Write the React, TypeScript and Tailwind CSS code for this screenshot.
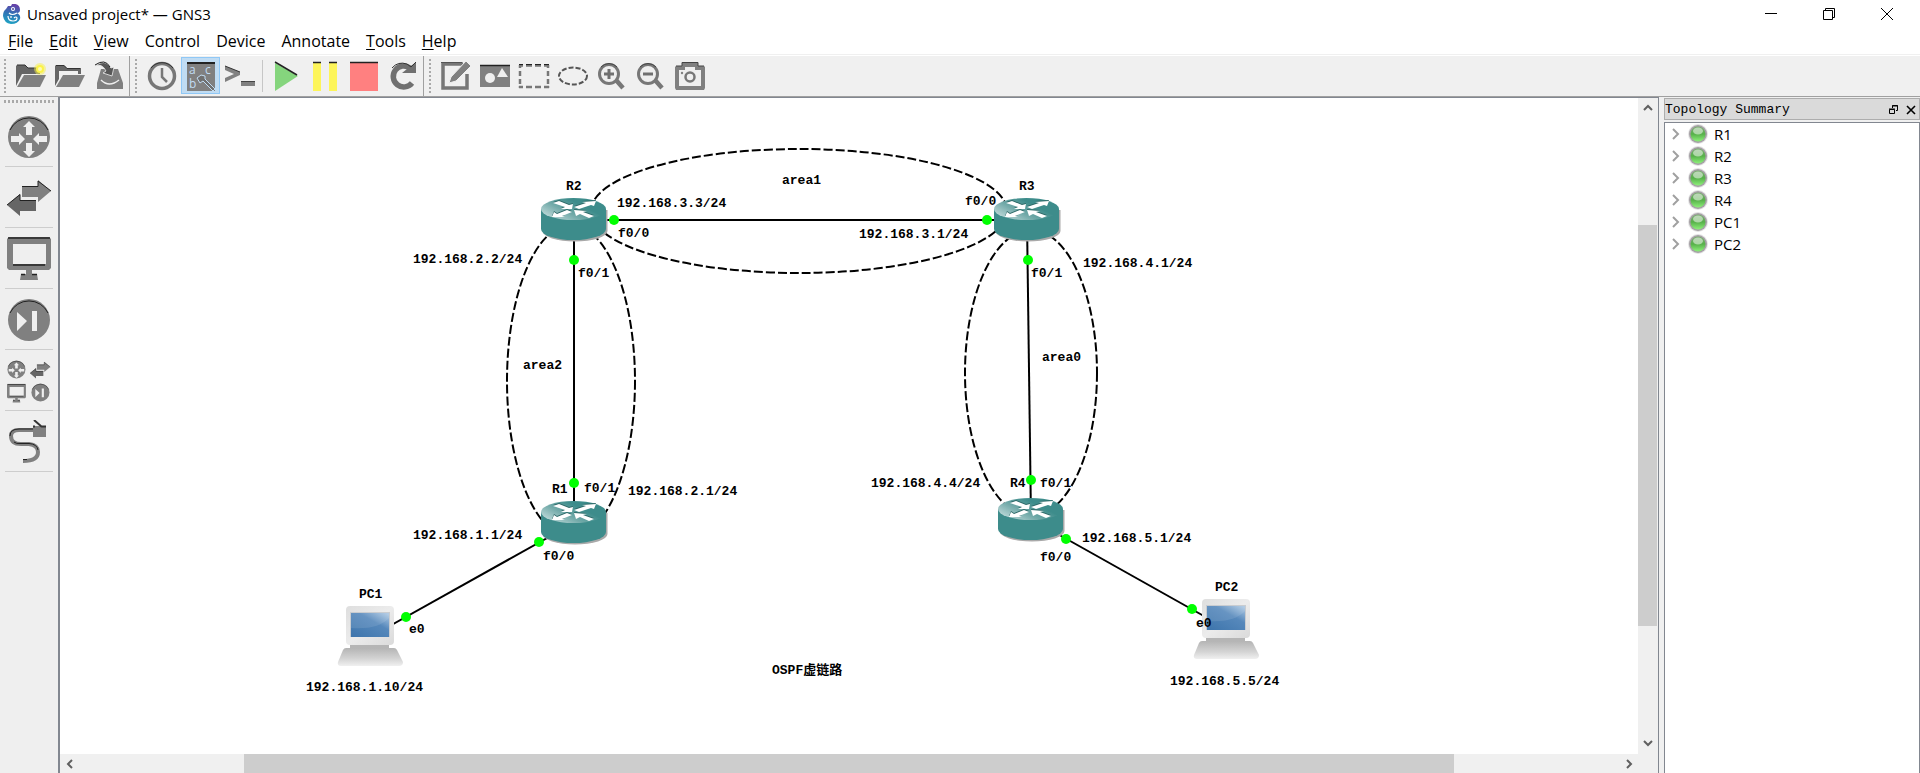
import { useState } from "react";
import type { ReactNode } from "react";
import clsx from "clsx";

const menus = [
  { key: "F", rest: "ile" },
  { key: "E", rest: "dit" },
  { key: "V", rest: "iew" },
  { key: "", rest: "Control" },
  { key: "", rest: "Device" },
  { key: "", rest: "Annotate" },
  { key: "T", rest: "ools" },
  { key: "H", rest: "elp" },
];

const topology = ["R1", "R2", "R3", "R4", "PC1", "PC2"];

const routers = [
  { id: "R2", x: 541, y: 198 },
  { id: "R3", x: 994, y: 198 },
  { id: "R1", x: 541, y: 501 },
  { id: "R4", x: 998, y: 498 },
];

const computers = [
  { id: "PC1", x: 338, y: 606 },
  { id: "PC2", x: 1194, y: 599 },
];

const links = [
  { from: [574, 220], to: [1027, 220] },
  { from: [574, 220], to: [574, 522] },
  { from: [1027, 220], to: [1031, 519] },
  { from: [574, 523], to: [370, 637] },
  { from: [1031, 519], to: [1227, 629] },
];

const ports = [
  [614, 220],
  [574, 260],
  [987, 220],
  [1028, 260],
  [574, 483],
  [1031, 480],
  [539, 542],
  [406, 617],
  [1066, 539],
  [1192, 609],
];

const areas = [
  { cx: 799, cy: 211, rx: 208, ry: 62 },
  { cx: 571, cy: 381, rx: 64, ry: 156 },
  { cx: 1031, cy: 373, rx: 66, ry: 143 },
];

const labels = [
  { x: 566, y: 190, text: "R2" },
  { x: 617, y: 207, text: "192.168.3.3/24" },
  { x: 618, y: 237, text: "f0/0" },
  { x: 578, y: 277, text: "f0/1" },
  { x: 413, y: 263, text: "192.168.2.2/24" },
  { x: 782, y: 184, text: "area1" },
  { x: 1019, y: 190, text: "R3" },
  { x: 965, y: 205, text: "f0/0" },
  { x: 859, y: 238, text: "192.168.3.1/24" },
  { x: 1031, y: 277, text: "f0/1" },
  { x: 1083, y: 267, text: "192.168.4.1/24" },
  { x: 523, y: 369, text: "area2" },
  { x: 1042, y: 361, text: "area0" },
  { x: 552, y: 493, text: "R1" },
  { x: 584, y: 492, text: "f0/1" },
  { x: 628, y: 495, text: "192.168.2.1/24" },
  { x: 413, y: 539, text: "192.168.1.1/24" },
  { x: 543, y: 560, text: "f0/0" },
  { x: 359, y: 598, text: "PC1" },
  { x: 409, y: 633, text: "e0" },
  { x: 306, y: 691, text: "192.168.1.10/24" },
  { x: 1010, y: 487, text: "R4" },
  { x: 1040, y: 487, text: "f0/1" },
  { x: 871, y: 487, text: "192.168.4.4/24" },
  { x: 1082, y: 542, text: "192.168.5.1/24" },
  { x: 1040, y: 561, text: "f0/0" },
  { x: 1215, y: 591, text: "PC2" },
  { x: 1196, y: 627, text: "e0" },
  { x: 1170, y: 685, text: "192.168.5.5/24" },
  { x: 772, y: 674, text: "OSPF虚链路" },
];

function Logo() {
  return (
    <svg className="h-5 w-[18px]" viewBox="0 0 18 20">
      <defs>
        <linearGradient id="logo" x1="0.6" y1="0" x2="0.4" y2="1">
          <stop offset="0" stopColor="#6a3fa8" />
          <stop offset="0.5" stopColor="#2f74b5" />
          <stop offset="1" stopColor="#1fa3c4" />
        </linearGradient>
      </defs>
      <path
        d="M5 2 L8 2 L9 0 Q17 -1 17 6 Q17 9 14 9 Q18 11 17 15 Q15 20 8 20 Q1 19 0 12 Q0 7 3 5Z"
        fill="url(#logo)"
      />
      <circle cx="10" cy="5" r="2" fill="#fff" />
      <circle cx="10" cy="5" r="1" fill="#4b4a9e" />
      <path d="M6 9 Q9 12 14 9 M5 12 Q5 17 10 17 Q14 17 14 14 Q13 12 11 14 M8 12 v2" fill="none" stroke="#fff" strokeWidth="1.2" />
    </svg>
  );
}

// Dotted grip at the start of every dockable bar
function Grip({ vertical }: { vertical?: boolean }) {
  return (
    <span
      className={clsx(
        "block shrink-0",
        vertical
          ? "mb-[3px] ml-1 h-[3px] w-[51px] bg-[repeating-linear-gradient(to_right,#a9a9a9_0_2px,#f0f0f0_2px_4px)]"
          : "mr-[5px] ml-1 h-[34px] w-[2px] bg-[repeating-linear-gradient(to_bottom,#a9a9a9_0_2px,#f0f0f0_2px_4px)]"
      )}
    />
  );
}

function Tool({
  label,
  active,
  onClick,
  children,
}: {
  label: string;
  active?: boolean;
  onClick?: () => void;
  children: ReactNode;
}) {
  return (
    <button
      aria-label={label}
      aria-pressed={active}
      onClick={onClick}
      className={clsx(
        "h-[37px] w-[39px] shrink-0",
        active ? "bg-[#c0dcf3] outline -outline-offset-1 outline-[#90c8f6]" : "hover:bg-[#d8eaf9]"
      )}
    >
      <svg className="h-[37px] w-[39px]" viewBox="0 0 39 37" fill="#808080">
        {children}
      </svg>
    </button>
  );
}

function ToolGroup({ children }: { children: ReactNode }) {
  return (
    <div className="flex h-full items-center pt-px pb-0.5">
      <Grip />
      {children}
    </div>
  );
}

function FileTools() {
  return (
    <ToolGroup>
      <Tool label="New project">
        <path d="M5 9 L6 8 H14 L17 11 H29 V17 H11 L5 29Z" fill="#666" />
        <path d="M6 8 H14 L17 11 H28" fill="none" stroke="#333" />
        <path d="M13 18 H35 L29 30 H6Z" />
        <circle cx="29" cy="12" r="6" fill="#f7f04a" opacity="0.5" />
        <circle cx="29" cy="12" r="4" fill="#fbf34a" />
        <circle cx="29" cy="12" r="2" fill="#fffbb0" />
      </Tool>
      <Tool label="Open project">
        <path d="M5 9 L6 8 H14 L17 11 H31 V17 H28 V14 H9 V22 L5 29Z" fill="#666" />
        <path d="M6 8.5 H14 L17 11.5 H30" fill="none" stroke="#333" />
        <path d="M13 18 H35 L29 30 H6Z" />
      </Tool>
      <Tool label="Save project as">
        <path d="M12 12 H29 L34 26 V32 H8 V26Z" />
        <path d="M12 23 Q20 31 30 23" fill="none" stroke="#efefef" strokeWidth="1.5" />
        <path d="M6 9 Q16 1 22 11 L25 10 L23 19 L14 16 L17 14 Q13 6 6 9Z" fill="#585858" stroke="#efefef" strokeWidth="0.8" />
        <path d="M6 8 Q16 1 21 10" fill="none" stroke="#222" />
      </Tool>
    </ToolGroup>
  );
}

function ControlTools() {
  const [showLabels, setShowLabels] = useState(true);

  return (
    <ToolGroup>
      <Tool label="Snapshot">
        <circle cx="20" cy="19" r="12.5" fill="#ededed" stroke="#777" strokeWidth="3.5" />
        <path d="M9 11 A14 14 0 0 1 31 11" fill="none" stroke="#333" />
        <path d="M20 11 V20 L25 25" fill="none" stroke="#777" strokeWidth="2.5" />
      </Tool>
      <Tool label="Show interface labels" active={showLabels} onClick={() => setShowLabels(!showLabels)}>
        <rect x="6" y="6" width="28" height="28" />
        <rect x="6" y="5" width="28" height="2" fill="#222" />
        <g fill="#c0dcf3" fontFamily="Open Sans, sans-serif" fontSize="12">
          <text x="8" y="17">a</text>
          <text x="24" y="17">c</text>
          <text x="8" y="31">b</text>
        </g>
        <path d="M16 21 L20 18 L24 19 L24 22 L34 32 L32 34 L22 24 L19 26Z" fill="#707070" stroke="#c0dcf3" />
      </Tool>
      <Tool label="Console connect to all nodes">
        <path d="M5 9 L20 15 V18 L5 25 V21 L14 17 L5 13Z" />
        <path d="M5 9 L20 15" stroke="#333" />
        <rect x="21" y="24" width="14" height="5" />
        <path d="M21 24.5 H35" stroke="#444" />
      </Tool>
      <span className="mx-[3px] h-8 w-px bg-[#c6c6c6]" />
      <Tool label="Start all nodes">
        <path d="M9 6 V34 L32 19Z" fill="#85d57d" />
        <path d="M9 5 L31 18" stroke="#222" strokeWidth="1.5" />
      </Tool>
      <Tool label="Suspend all nodes">
        <path d="M8 6 H16 V34 H8Z M24 6 H32 V34 H24Z" fill="#fdf55a" />
        <path d="M8 5.5 H16 M24 5.5 H32" stroke="#222" strokeWidth="1.5" />
      </Tool>
      <Tool label="Stop all nodes">
        <rect x="6" y="6" width="28" height="28" fill="#ff8080" />
        <path d="M6 5.5 H34" stroke="#222" strokeWidth="1.5" />
      </Tool>
      <Tool label="Reload all nodes">
        <path d="M27 11 A10.5 10.5 0 1 0 29 26" fill="none" stroke="#707070" strokeWidth="5.5" />
        <path d="M33 5 V16 H19 L24 12Z" fill="#707070" />
        <path d="M9 11 Q15 4 24 7 L28 10 L33 5" fill="none" stroke="#333" />
      </Tool>
    </ToolGroup>
  );
}

function Magnifier({ plus }: { plus?: boolean }) {
  return (
    <>
      <path d="M24 23 L31 31" stroke="#777" strokeWidth="4.5" />
      <circle cx="17" cy="17" r="9.5" fill="#efefef" stroke="#777" strokeWidth="3" />
      <path d="M9 10 A11 11 0 0 1 25 10" fill="none" stroke="#444" />
      <path d={plus ? "M12 17 H22 M17 12 V22" : "M12 17 H22"} stroke="#707070" strokeWidth="3" />
    </>
  );
}

function AnnotateTools() {
  return (
    <ToolGroup>
      <Tool label="Add a note">
        <path d="M31 17 V31 H7 V7 H27" fill="none" stroke="#777" strokeWidth="3.5" />
        <path d="M5 5.5 H26" stroke="#555" />
        <path d="M30 4 L35 9 L20 24 L13 26 L15 20Z" stroke="#efefef" />
      </Tool>
      <Tool label="Insert a picture">
        <rect x="5" y="9" width="30" height="21" />
        <path d="M5 8.5 H35" stroke="#222" strokeWidth="1.5" />
        <circle cx="15" cy="21" r="5" fill="#efefef" />
        <path d="M22 20 L27 11 L33 20Z" fill="#efefef" />
      </Tool>
      <Tool label="Draw a rectangle">
        <path
          d="M5 8.5 H9 M12 8.5 H18 M21 8.5 H27 M30 8.5 H35 M5 30 H9 M12 30 H18 M21 30 H27 M30 30 H35 M6 8 V11 M6 14 V19 M6 22 V27 M6 29 V31 M34 8 V11 M34 14 V19 M34 22 V27 M34 29 V31"
          stroke="#777"
          strokeWidth="2.5"
        />
        <path d="M5 7.5 H9 M12 7.5 H18 M21 7.5 H27 M30 7.5 H35" stroke="#222" />
      </Tool>
      <Tool label="Draw an ellipse">
        <ellipse cx="20" cy="19" rx="14" ry="8.5" fill="none" stroke="#555" strokeWidth="2" strokeDasharray="5 2" />
      </Tool>
      <Tool label="Zoom in">
        <Magnifier plus />
      </Tool>
      <Tool label="Zoom out">
        <Magnifier />
      </Tool>
      <Tool label="Take a screenshot">
        <path d="M6 9 H12 V6 H28 V9 H34 L35 10 V31 L34 33 H6 L5 31 V10Z" />
        <path d="M6 9 H12 V5.5 H28 V9 H34" fill="none" stroke="#444" />
        <path d="M9 13 H15 V10 H25 V13 H31 V29 H9Z" fill="#efefef" />
        <circle cx="20" cy="20" r="4.5" fill="#efefef" stroke="#777" strokeWidth="2.5" />
        <circle cx="12" cy="16" r="1.2" />
      </Tool>
    </ToolGroup>
  );
}

function RouterGlyph() {
  return (
    <>
      <circle cx="22" cy="22" r="21" />
      <path d="M3 15 A21 21 0 0 1 41 15" fill="none" stroke="#222" />
      <path
        d="M22 6 L28 12 H25 V20 H19 V12 H16Z M22 42 L28 36 H25 V28 H19 V36 H16Z M18 24 L12 18 V21 H4 V27 H12 V30Z M26 24 L32 18 V21 H40 V27 H32 V30Z"
        fill="#efefef"
      />
    </>
  );
}

function SwitchGlyph() {
  return (
    <>
      <path d="M15 10 H31 V4 L44 15 L31 26 V21 H15Z" />
      <path d="M15 10.5 H31 V5 L44 15" fill="none" stroke="#222" />
      <path d="M29 24 H13 V18 L0 29 L13 40 V35 H29Z" fill="#666" />
      <path d="M0 29 L13 18.5 V24.5 H29" fill="none" stroke="#222" />
    </>
  );
}

function MonitorGlyph() {
  return (
    <>
      <path d="M2 0 H42 L44 2 V31 L42 33 H25 V37 H30 L31 43 H13 L14 37 H19 V33 H2 L0 31 V2Z" />
      <path d="M1 1 H43 M6 28 H38 M14 37.5 H18 M25 37.5 H30" stroke="#222" strokeWidth="1.5" />
      <rect x="6" y="7" width="33" height="20" fill="#efefef" />
    </>
  );
}

function SecurityGlyph() {
  return (
    <>
      <circle cx="22" cy="22" r="21" />
      <path d="M3 15 A21 21 0 0 1 41 15" fill="none" stroke="#222" />
      <path d="M10 14 L20 23 L10 33Z M25 13 H30 V33 H25Z" fill="#efefef" />
    </>
  );
}

const deviceTools = [
  { label: "Browse routers", glyph: <RouterGlyph /> },
  { label: "Browse switches", glyph: <SwitchGlyph /> },
  { label: "Browse end devices", glyph: <MonitorGlyph /> },
  { label: "Browse security devices", glyph: <SecurityGlyph /> },
  {
    label: "Browse all devices",
    glyph: (
      <>
        <g transform="translate(0 1) scale(0.43)"><RouterGlyph /></g>
        <g transform="translate(23 1) scale(0.46)"><SwitchGlyph /></g>
        <g transform="translate(0 25) scale(0.43)"><MonitorGlyph /></g>
        <g transform="translate(24 24) scale(0.43)"><SecurityGlyph /></g>
      </>
    ),
  },
  {
    label: "Add a link",
    glyph: (
      <>
        <path d="M26 10 H12 Q4 10 4 16 Q4 24 14 24 H22 Q31 25 31 32 Q31 41 16 41" fill="none" stroke="#808080" strokeWidth="4" />
        <path d="M26 9 H12 Q3 9 3 16 M7 22 Q9 24 14 23.5 H22 Q30 24 31 30 M16 39.5 H20" fill="none" stroke="#222" />
        <path d="M26 6 H39 V17 H26Z" />
        <path d="M27 0 L35 7 M26 6.5 H28 M35 6.5 H39" stroke="#333" strokeWidth="2" />
      </>
    ),
  },
];

function DeviceBar() {
  return (
    <aside className="w-[58px] shrink-0 bg-[#efefef] pt-[3px]">
      <Grip vertical />
      {deviceTools.map((tool) => (
        <button
          key={tool.label}
          aria-label={tool.label}
          className="relative flex h-[61px] w-full items-center justify-center hover:bg-[#d8eaf9]"
        >
          <svg className="size-11" viewBox="0 0 44 44" fill="#808080">
            {tool.glyph}
          </svg>
          <span className="absolute inset-x-[5px] bottom-0 h-px bg-[#cdcdcd]" />
        </button>
      ))}
    </aside>
  );
}

function RouterNode({ x, y }: { x: number; y: number }) {
  return (
    <g transform={`translate(${x} ${y})`}>
      <path d="M1.5 12 V33 A32.5 10.5 0 0 0 66.5 33 V12Z" fill="#a9a9a9" />
      <path d="M0 11 V31 A32.5 11 0 0 0 65 31 V11Z" fill="#3d8c8b" />
      <ellipse cx="32.5" cy="11" rx="32.5" ry="11" fill="url(#routerTop)" />
      <path
        d="M12 4 L18 2 L28 6 L32 5 L31 10 L20 10 L24 8Z M33 8 L38 10 L50 6 L53 7 L55 2 L41 3 L45 4Z M26 11 L31 13 L21 17 L24 18 L11 18 L13 13 L16 15Z M53 17 L48 19 L39 15 L35 17 L33 11 L46 12 L42 13Z"
        fill="#2c6867"
      />
      <path
        d="M12 5 L18 3 L28 7 L32 6 L31 11 L20 11 L24 9Z M33 9 L38 11 L50 7 L53 8 L55 3 L41 4 L45 5Z M26 12 L31 14 L21 18 L24 19 L11 19 L13 14 L16 16Z M53 18 L48 20 L39 16 L35 18 L33 12 L46 13 L42 14Z"
        fill="#fff"
      />
    </g>
  );
}

function ComputerNode({ x, y }: { x: number; y: number }) {
  return (
    <g transform={`translate(${x} ${y})`}>
      <rect x="12" y="37" width="39" height="6" fill="#b5b5b5" />
      <rect x="8" y="0" width="48" height="39" rx="4" fill="url(#pcCase)" />
      <rect x="12" y="6" width="40" height="25" fill="#c9ccd0" />
      <rect x="13" y="7" width="38" height="24" fill="url(#pcScreen)" />
      <path d="M13 22 Q40 24 51 12 V8 Q50 7 45 7 H13Z" fill="#fff" opacity="0.1" />
      <path d="M8 42 H56 Q58 42 59 44 L65 56 Q65 60 61 60 H3 Q-1 60 0 56 L5 44 Q6 42 8 42Z" fill="url(#pcBase)" />
    </g>
  );
}

function Scene() {
  return (
    <svg className="min-h-0 w-full flex-1 bg-white">
      <defs>
        <linearGradient id="routerTop" x1="0" y1="0.7" x2="0.6" y2="0.3">
          <stop offset="0" stopColor="#b9d6d6" />
          <stop offset="0.5" stopColor="#74abaa" />
          <stop offset="1" stopColor="#3d8c8b" />
        </linearGradient>
        <linearGradient id="pcCase" x1="0" y1="0" x2="1" y2="1">
          <stop offset="0" stopColor="#dedede" />
          <stop offset="0.5" stopColor="#ececec" />
          <stop offset="1" stopColor="#dadada" />
        </linearGradient>
        <linearGradient id="pcScreen" x1="0.1" y1="1" x2="1" y2="0">
          <stop offset="0" stopColor="#3f76ad" />
          <stop offset="0.6" stopColor="#5688bb" />
          <stop offset="1" stopColor="#b3cde6" />
        </linearGradient>
        <linearGradient id="pcBase" x1="0" y1="0" x2="0" y2="1">
          <stop offset="0" stopColor="#b4b4b4" />
          <stop offset="0.6" stopColor="#d4d4d4" />
          <stop offset="1" stopColor="#f0f0f0" />
        </linearGradient>
      </defs>
      {/* scroll offset of the scene */}
      <g transform="translate(-60 -98)">
        <g fill="none" stroke="#000" strokeWidth="2" strokeDasharray="9 3">
          {areas.map((area) => (
            <ellipse key={area.cx} {...area} />
          ))}
        </g>
        <g stroke="#000" strokeWidth="2">
          {links.map((link, i) => (
            <line key={i} x1={link.from[0]} y1={link.from[1]} x2={link.to[0]} y2={link.to[1]} />
          ))}
        </g>
        {routers.map((node) => (
          <RouterNode key={node.id} x={node.x} y={node.y} />
        ))}
        {computers.map((node) => (
          <ComputerNode key={node.id} x={node.x} y={node.y} />
        ))}
        <g fill="#00ff00">
          {ports.map(([cx, cy]) => (
            <circle key={`${cx}-${cy}`} cx={cx} cy={cy} r="5" />
          ))}
        </g>
        <g className="font-['Liberation_Mono','Noto_Sans_CJK_SC',monospace] text-[13px] font-bold">
          {labels.map((label) => (
            <text key={`${label.x}-${label.y}`} x={label.x} y={label.y}>
              {label.text}
            </text>
          ))}
        </g>
      </g>
    </svg>
  );
}

function ScrollButton({ label, d }: { label: string; d: string }) {
  return (
    <button aria-label={label} className="flex size-[19px] shrink-0 items-center justify-center">
      <svg className="size-3" viewBox="0 0 12 12" fill="none" stroke="#606060" strokeWidth="2">
        <path d={d} />
      </svg>
    </button>
  );
}

function Workspace() {
  return (
    <main className="flex min-w-0 flex-1 border-t border-r border-l-2 border-[#828790] bg-white">
      <div className="flex min-w-0 flex-1 flex-col">
        <Scene />
        <div className="flex h-[19px] shrink-0 bg-[#f0f0f0]">
          <ScrollButton label="Scroll left" d="M8 2 L4 6 L8 10" />
          <div className="flex flex-1">
            <span className="grow-[165]" />
            <span className="grow-[1210] bg-[#cdcdcd]" />
            <span className="grow-[165]" />
          </div>
          <ScrollButton label="Scroll right" d="M4 2 L8 6 L4 10" />
        </div>
      </div>
      <div className="flex w-5 shrink-0 flex-col bg-[#f0f0f0] pr-px pb-[21px]">
        <ScrollButton label="Scroll up" d="M2 8 L6 4 L10 8" />
        <div className="flex flex-1 flex-col">
          <span className="grow-[108]" />
          <span className="grow-[401] bg-[#cdcdcd]" />
          <span className="grow-[107]" />
        </div>
        <ScrollButton label="Scroll down" d="M2 4 L6 8 L10 4" />
      </div>
    </main>
  );
}

function StatusLight() {
  return (
    <svg className="size-5" viewBox="0 0 20 20">
      <defs>
        <linearGradient id="light" x1="0" y1="0" x2="0" y2="1">
          <stop offset="0" stopColor="#7fae77" />
          <stop offset="0.5" stopColor="#57b04a" />
          <stop offset="1" stopColor="#8df07a" />
        </linearGradient>
      </defs>
      <circle cx="10" cy="10" r="10" fill="#e3e3e3" />
      <circle cx="10" cy="10" r="9" fill="#a5a0a5" />
      <circle cx="10" cy="10" r="7.5" fill="url(#light)" />
      <ellipse cx="10" cy="7" rx="5" ry="3.5" fill="#fff" opacity="0.5" />
    </svg>
  );
}

function TopologySummary() {
  return (
    <aside className="ml-[5px] flex w-64 shrink-0 flex-col bg-[#f0f0f0] pt-px">
      <header className="flex h-[22px] items-center border border-[#adadad] bg-[#dadada] pt-0.5 pr-[3px]">
        <h2 className="flex-1 font-['Liberation_Mono',monospace] text-[13px] leading-5">Topology Summary</h2>
        <button aria-label="Float panel" className="mr-[7px]">
          <svg className="size-[10px]" viewBox="0 0 10 10" fill="none" stroke="#000">
            <path d="M3.5 3 V0.5 H8.5 V5.5 H7 M3 1 H9 M0.5 4.5 H5.5 V8.5 H0.5Z M0 4 H6" />
          </svg>
        </button>
        <button aria-label="Close panel">
          <svg className="size-[10px]" viewBox="0 0 10 10" stroke="#000" strokeWidth="1.6">
            <path d="M1 1 L9 9 M9 1 L1 9" />
          </svg>
        </button>
      </header>
      <ul className="mt-[2px] flex-1 border border-b-0 border-[#828790] bg-white">
        {topology.map((name) => (
          <li key={name}>
            <button className="flex h-[22px] w-full items-center pl-[5px] text-[15px]">
              <svg className="h-3 w-3" viewBox="0 0 12 12" fill="none" stroke="#a0a0a0" strokeWidth="2">
                <path d="M3 1 L8 6 L3 11" />
              </svg>
              <span className="mr-[6px] ml-[6px]">
                <StatusLight />
              </span>
              {name}
            </button>
          </li>
        ))}
      </ul>
    </aside>
  );
}

export default function App() {
  return (
    <div className="flex h-screen flex-col overflow-hidden bg-[#f0f0f0] font-['Open_Sans',sans-serif] text-black">
      <header className="flex h-7 shrink-0 items-center bg-white pl-[3px]">
        <Logo />
        <h1 className="ml-[6px] flex-1 text-[15px]">Unsaved project* — GNS3</h1>
        <div className="flex items-center gap-[46px] pr-[27px]">
          <button aria-label="Minimize">
            <svg className="size-3" viewBox="0 0 12 12" stroke="#000">
              <path d="M0 5.5 H12" />
            </svg>
          </button>
          <button aria-label="Restore">
            <svg className="size-3" viewBox="0 0 12 12" fill="none" stroke="#000">
              <path d="M0.5 2.5 H9.5 V11.5 H0.5Z M2.5 2.5 V0.5 H11.5 V9.5 H9.5" />
            </svg>
          </button>
          <button aria-label="Close">
            <svg className="size-3" viewBox="0 0 12 12" stroke="#000">
              <path d="M0 0 L12 12 M12 0 L0 12" />
            </svg>
          </button>
        </div>
      </header>

      <nav className="flex h-[27px] shrink-0 items-center border-b border-[#f0f0f0] bg-white text-base">
        {menus.map((menu) => (
          <button key={menu.rest} className="px-2 hover:bg-[#d8eaf9]">
            <span className="underline underline-offset-2">{menu.key}</span>
            {menu.rest}
          </button>
        ))}
      </nav>

      <div className="flex h-[42px] shrink-0 items-center border-t border-b border-t-white border-b-[#a0a0a0] bg-[#f0f0f0]">
        <FileTools />
        <span className="mx-px h-full w-px bg-[#a0a0a0]" />
        <ControlTools />
        <span className="mx-px h-full w-px bg-[#a0a0a0]" />
        <AnnotateTools />
      </div>

      <div className="flex min-h-0 flex-1">
        <DeviceBar />
        <Workspace />
        <TopologySummary />
      </div>
    </div>
  );
}
